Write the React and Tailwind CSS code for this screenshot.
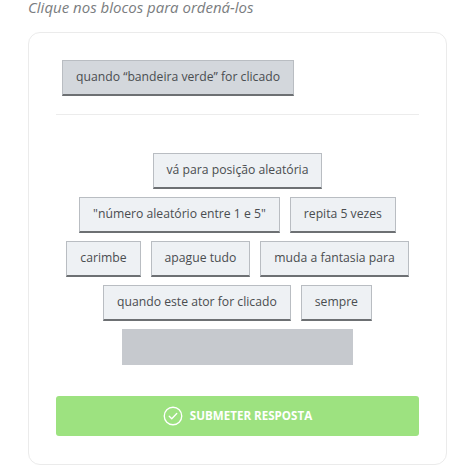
import React from "react";

const rows = [
  ["vá para posição aleatória"],
  ["\"número aleatório entre 1 e 5\"", "repita 5 vezes"],
  ["carimbe", "apague tudo", "muda a fantasia para"],
  ["quando este ator for clicado", "sempre"],
];

function Block({ children, selected }) {
  return (
    <div
      className={
        "h-[36px] px-[13px] flex items-center border border-[#b9bdc2] border-b-[2px] border-b-[#6d7073] text-[12.2px] text-[#4a4d50] whitespace-nowrap " +
        (selected ? "bg-[#d3d7dc]" : "bg-[#eef1f4]")
      }
    >
      {children}
    </div>
  );
}

export default function App() {
  return (
    <div className="w-[474px] h-[476px] bg-white overflow-hidden font-['Open_Sans',sans-serif]">
      <div className="pl-[28px] mt-[-3px] h-[35px] text-[15px] leading-[20px] italic text-[#7a7d80]">
        Clique nos blocos para ordená-los
      </div>
      <div className="ml-[28px] w-[419px] border border-[#ebebeb] rounded-[12px] px-[27px] pt-[27px] pb-[28px]">
        <div className="flex ml-[6px]">
          <Block selected>quando “bandeira verde” for clicado</Block>
        </div>
        <div className="mt-[18px] h-px bg-[#ececec]" />
        <div className="mt-[38px] flex flex-col items-center gap-[8px]">
          {rows.map((row, i) => (
            <div key={i} className="flex gap-[10px]">
              {row.map((b) => (
                <Block key={b}>{b}</Block>
              ))}
            </div>
          ))}
          <div className="w-[231px] h-[36px] bg-[#c6c9ce]" />
        </div>
        <button className="mt-[31px] w-full h-[40px] rounded-[3px] bg-[#9de280] flex items-center justify-center gap-[7px] text-white text-[11.6px] font-bold">
          <svg width="20" height="20" viewBox="0 0 24 24" fill="none" stroke="white" strokeWidth="1.6" strokeLinecap="round" strokeLinejoin="round">
            <circle cx="12" cy="12" r="10.5" />
            <path d="M7.5 12.3l3 3 6-6.3" />
          </svg>
          SUBMETER RESPOSTA
        </button>
      </div>
    </div>
  );
}
